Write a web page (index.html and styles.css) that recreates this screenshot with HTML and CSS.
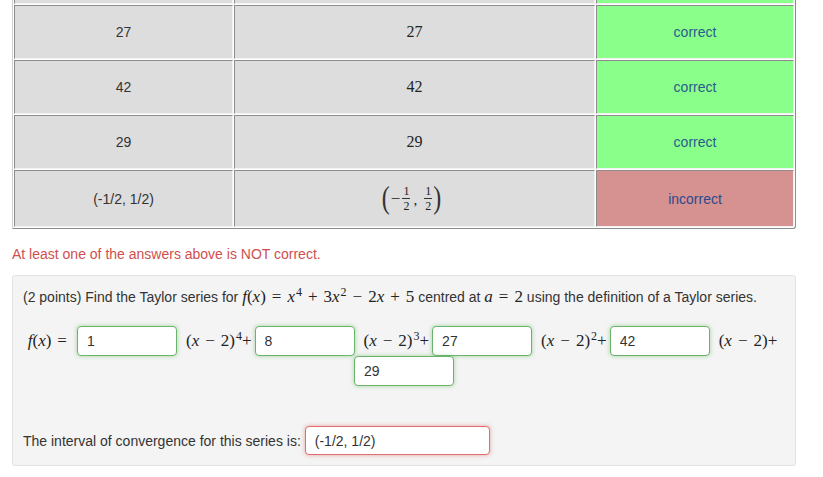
FILE: index.html
```html
<!DOCTYPE html>
<html>
<head>
<meta charset="utf-8">
<link rel="stylesheet" href="styles.css">
</head>
<body>
<div class="page">
  <table class="results">
    <tr>
      <td class="c1"><div class="cell"></div></td>
      <td class="c2"><div class="cell m"></div></td>
      <td class="c3 ok"><div class="cell"></div></td>
    </tr>
    <tr>
      <td class="c1"><div class="cell">27</div></td>
      <td class="c2"><div class="cell m">27</div></td>
      <td class="c3 ok"><div class="cell">correct</div></td>
    </tr>
    <tr>
      <td class="c1"><div class="cell">42</div></td>
      <td class="c2"><div class="cell m">42</div></td>
      <td class="c3 ok"><div class="cell">correct</div></td>
    </tr>
    <tr>
      <td class="c1"><div class="cell">29</div></td>
      <td class="c2"><div class="cell m">29</div></td>
      <td class="c3 ok"><div class="cell">correct</div></td>
    </tr>
    <tr>
      <td class="c1"><div class="cell tall">(-1/2, 1/2)</div></td>
      <td class="c2"><div class="cell tall m">
        <span class="interval"><span class="paren">(</span><span class="neg">−</span><span class="frac"><span class="num">1</span><span class="den">2</span></span><span class="comma">,</span><span class="frac"><span class="num">1</span><span class="den">2</span></span><span class="paren">)</span></span>
      </div></td>
      <td class="c3 bad"><div class="cell tall">incorrect</div></td>
    </tr>
  </table>

  <p class="warning">At least one of the answers above is NOT correct.</p>

  <div class="problem">
    <p class="statement">(2 points) Find the Taylor series for <span class="m big"><i>f</i>(<i>x</i>)<span class="rel">=</span><i>x</i><sup>4</sup><span class="op">+</span>3<i>x</i><sup>2</sup><span class="op">−</span>2<i>x</i><span class="op">+</span>5</span> centred at <span class="m big"><i>a</i><span class="rel">=</span>2</span> using the definition of a Taylor series.</p>

    <div class="equation">
      <span class="m big lead"><i>f</i>(<i>x</i>)<span class="rel">=</span></span>
      <input class="ans good" type="text" value="1">
      <span class="m big term">(<i>x</i><span class="op">−</span>2)<sup>4</sup>+</span>
      <input class="ans good" type="text" value="8">
      <span class="m big term">(<i>x</i><span class="op">−</span>2)<sup>3</sup>+</span>
      <input class="ans good" type="text" value="27">
      <span class="m big term">(<i>x</i><span class="op">−</span>2)<sup>2</sup>+</span>
      <input class="ans good" type="text" value="42">
      <span class="m big term">(<i>x</i><span class="op">−</span>2)+</span>
      <input class="ans good" type="text" value="29">
    </div>

    <div class="interval-row">
      <span>The interval of convergence for this series is:</span>
      <input class="ans wide badin" type="text" value="(-1/2, 1/2)">
    </div>
  </div>
</div>
</body>
</html>
```

FILE: styles.css
```css
html, body {
  margin: 0;
  padding: 0;
  background: #ffffff;
}

body {
  font-family: "Liberation Sans", Arial, sans-serif;
  font-size: 14px;
  color: #333333;
}

.page {
  padding: 0 12px;
  width: 784px;
}

.results {
  margin-top: -52px;
  border-collapse: separate;
  border-spacing: 1px;
  border-style: solid;
  border-width: 1px;
  border-color: #d0d0d0 #8c8c8c #8c8c8c #d0d0d0;
  border-radius: 0 0 3px 0;
  width: 784px;
  table-layout: fixed;
}

.results td {
  padding: 0;
  border-style: solid;
  border-width: 1px;
  border-color: #8c8c8c #f2f2f2 #f2f2f2 #8c8c8c;
  background: #dddddd;
  vertical-align: middle;
  text-align: center;
}

.results .c1 { width: 217px; }
.results .c2 { width: 359px; }
.results .c3 { width: 196px; }

.results td.ok {
  background: #8aff8a;
  color: #2b5a8e;
}

.results td.bad {
  background: #d69191;
  color: #2b4a8e;
}

.cell {
  height: 52px;
  display: flex;
  align-items: center;
  justify-content: center;
}

.cell.tall {
  height: 55px;
}

.m {
  font-family: "Liberation Serif", "Times New Roman", serif;
  font-size: 16px;
  color: #222222;
}

.m.big {
  font-size: 17px;
}

.m i {
  font-style: italic;
}

.m sup {
  font-size: 12px;
  line-height: 0;
  vertical-align: 0.5em;
  margin-left: 1px;
}

.op {
  margin: 0 6px;
}

.rel {
  margin: 0 6px;
}

.interval {
  display: inline-flex;
  align-items: center;
  margin-right: 6px;
}

.paren {
  font-size: 24px;
  transform: scaleY(1.3);
  display: inline-block;
  color: #333333;
}

.neg {
  margin: 0 1px 0 1px;
  font-size: 17px;
}

.frac {
  display: inline-flex;
  flex-direction: column;
  align-items: center;
  font-size: 12px;
  line-height: 12px;
  margin: 0 1px;
}

.frac .num {
  border-bottom: 1px solid #333333;
  padding: 0 1px 1px;
}

.frac .den {
  padding-top: 1px;
}

.comma {
  align-self: flex-end;
  margin: 0 6px 4px 2px;
  font-size: 15px;
  line-height: 15px;
}

.warning {
  margin: 16px 0 0 0;
  line-height: 18px;
  color: #cf4f4f;
}

.problem {
  margin-top: 12px;
  box-sizing: border-box;
  width: 784px;
  height: 191px;
  background: #f4f4f4;
  border: 1px solid #e2e2e2;
  border-radius: 3px;
  padding: 10px 10px 0 10px;
}

.statement {
  margin: 0;
  line-height: 22px;
}

.equation {
  margin-top: 18px;
  display: flex;
  flex-wrap: wrap;
  justify-content: center;
  align-items: baseline;
}

.equation .lead {
  margin-right: 4px;
}

.equation .term {
  margin: 0 3px 0 9px;
}

.ans {
  box-sizing: border-box;
  width: 100px;
  height: 30px;
  padding: 0 9px;
  font-family: "Liberation Sans", Arial, sans-serif;
  font-size: 14px;
  color: #333333;
  background: #ffffff;
  border-radius: 4px;
  outline: none;
  margin: 0;
}

.ans.good {
  border: 1px solid #6cb46c;
  box-shadow: 0 0 4px rgba(92, 184, 92, 0.55);
}

.ans.badin {
  border: 1px solid #e07070;
  box-shadow: 0 0 4px rgba(217, 83, 79, 0.5);
}

.ans.wide {
  width: 185px;
  height: 29px;
  margin-left: 4px;
}

.interval-row {
  margin-top: 40px;
  display: flex;
  align-items: center;
}
```
